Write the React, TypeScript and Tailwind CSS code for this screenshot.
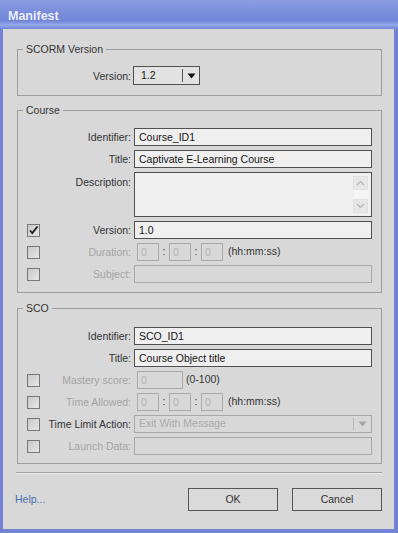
import React from 'react';

const FONT = "font-['Liberation_Sans',Arial,sans-serif]";

const Checkbox: React.FC<{ checked?: boolean }> = ({ checked }) => (
  <span className="w-[13px] h-[13px] shrink-0 border border-[#777] bg-[linear-gradient(135deg,#c9c9c9,#e6e6e6)] flex items-center justify-center">
    {checked && (
      <svg width="11" height="11" viewBox="0 0 11 11">
        <path d="M2 5.5 L4.3 8 L9.5 1.5" fill="none" stroke="#1a1a1a" strokeWidth="1.8" />
      </svg>
    )}
  </span>
);

const Label: React.FC<{ text: string; disabled?: boolean; top?: boolean }> = ({ text, disabled, top }) => (
  <span
    className={`w-[91px] shrink-0 text-right leading-[18px] ${top ? 'pt-[1px]' : ''} ${
      disabled ? 'text-[#a4a4a4]' : 'text-[#333]'
    }`}
  >
    {text}
  </span>
);

const TextBox: React.FC<{ value?: string; disabled?: boolean; className?: string }> = ({ value, disabled, className }) => (
  <div
    className={`h-[18px] border px-[4px] leading-[16px] truncate ${
      disabled ? 'border-[#a9a9a9] bg-[#d8d8d8] text-[#b0b0b0]' : 'border-[#505050] bg-[#efefef] text-[#151515]'
    } ${className ?? ''}`}
  >
    {value}
  </div>
);

const Row: React.FC<{ check?: 'on' | 'off'; children: React.ReactNode; start?: boolean }> = ({ check, children, start }) => (
  <div className={`flex ${start ? 'items-start' : 'items-center'}`}>
    <span className="w-[13px] shrink-0 flex">{check && <Checkbox checked={check === 'on'} />}</span>
    {children}
  </div>
);

const TimeFields: React.FC = () => (
  <div className="flex items-center ml-[6px] text-[#333]">
    <TextBox value="0" disabled className="w-[22px] !px-[3px]" />
    <span className="w-[10px] text-center">:</span>
    <TextBox value="0" disabled className="w-[22px] !px-[3px]" />
    <span className="w-[10px] text-center">:</span>
    <TextBox value="0" disabled className="w-[22px] !px-[3px]" />
    <span className="ml-[5px]">(hh:mm:ss)</span>
  </div>
);

const Arrow: React.FC<{ color: string }> = ({ color }) => (
  <svg width="9" height="6" viewBox="0 0 9 6">
    <path d="M0.5 0.5 L8.5 0.5 L4.5 5.5 Z" fill={color} />
  </svg>
);

const Legend: React.FC<{ text: string }> = ({ text }) => (
  <legend className="-ml-[4px] px-[3px] leading-[12px] text-[#333]">{text}</legend>
);

export default function App() {
  return (
    <div className={`w-[398px] h-[533px] bg-[#7282d5] flex flex-col text-[10.5px] ${FONT}`}>
      <div className="h-[29px] shrink-0 flex items-center pl-[8px] pt-[4px] bg-[linear-gradient(to_bottom,#8d9ee3_0%,#7d90dd_35%,#7286d8_72%,#93a8ec_86%,#7385d6_100%)]">
        <span className="text-[12.5px] font-bold text-[#eef1ff] [text-shadow:0_0_1px_#5d6fc6]">Manifest</span>
      </div>

      <div className="flex-1 ml-[3px] mr-[4px] mb-[4px] bg-[#d8d8d8] flex flex-col">
        {/* SCORM Version */}
        <fieldset className="mt-[14px] ml-[14px] mr-[12px] border border-[#9d9d9d] pl-[9px] pr-[9px] pb-[10px]">
          <Legend text="SCORM Version" />
          <div className="mt-[11px] flex items-center">
            <span className="w-[13px]" />
            <Label text="Version:" />
            <div className="ml-[2px] w-[67px] h-[19px] border border-[#505050] bg-[#e2e2e2] flex items-center">
              <span className="flex-1 pl-[7px] text-[#151515]">1.2</span>
              <span className="w-px h-[13px] bg-[#555]" />
              <span className="w-[16px] flex justify-center">
                <Arrow color="#111" />
              </span>
            </div>
          </div>
        </fieldset>

        {/* Course */}
        <fieldset className="mt-[8px] ml-[14px] mr-[12px] border border-[#9d9d9d] pl-[9px] pr-[9px] pb-[9px]">
          <Legend text="Course" />
          <div className="mt-[12px] flex flex-col gap-[4px]">
            <Row>
              <Label text="Identifier:" />
              <TextBox value="Course_ID1" className="flex-1 ml-[3px]" />
            </Row>
            <Row>
              <Label text="Title:" />
              <TextBox value="Captivate E-Learning Course" className="flex-1 ml-[3px]" />
            </Row>
            <Row start>
              <Label text="Description:" top />
              <div className="flex-1 ml-[3px] h-[45px] border border-[#505050] bg-[#efefef] flex justify-end p-[3px]">
                <div className="w-[15px] flex flex-col justify-between bg-[#f4f4f4]">
                  <span className="h-[14px] bg-[#e6e6e6] border border-[#e0e0e0] flex items-center justify-center">
                    <svg width="9" height="6" viewBox="0 0 9 6">
                      <path d="M1 5 L4.5 1.5 L8 5" fill="none" stroke="#b5b5b5" strokeWidth="1.2" />
                    </svg>
                  </span>
                  <span className="h-[14px] bg-[#e6e6e6] border border-[#e0e0e0] flex items-center justify-center">
                    <svg width="9" height="6" viewBox="0 0 9 6">
                      <path d="M1 1 L4.5 4.5 L8 1" fill="none" stroke="#b5b5b5" strokeWidth="1.2" />
                    </svg>
                  </span>
                </div>
              </div>
            </Row>
            <Row check="on">
              <Label text="Version:" />
              <TextBox value="1.0" className="flex-1 ml-[3px]" />
            </Row>
            <Row check="off">
              <Label text="Duration:" disabled />
              <TimeFields />
            </Row>
            <Row check="off">
              <Label text="Subject:" disabled />
              <TextBox disabled className="flex-1 ml-[3px]" />
            </Row>
          </div>
        </fieldset>

        {/* SCO */}
        <fieldset className="mt-[9px] ml-[14px] mr-[12px] border border-[#9d9d9d] pl-[9px] pr-[9px] pb-[8px]">
          <Legend text="SCO" />
          <div className="mt-[13px] flex flex-col gap-[4px]">
            <Row>
              <Label text="Identifier:" />
              <TextBox value="SCO_ID1" className="flex-1 ml-[3px]" />
            </Row>
            <Row>
              <Label text="Title:" />
              <TextBox value="Course Object title" className="flex-1 ml-[3px]" />
            </Row>
            <Row check="off">
              <Label text="Mastery score:" disabled />
              <TextBox value="0" disabled className="w-[46px] ml-[6px] !px-[3px]" />
              <span className="ml-[3px] text-[#333]">(0-100)</span>
            </Row>
            <Row check="off">
              <Label text="Time Allowed:" disabled />
              <TimeFields />
            </Row>
            <Row check="off">
              <Label text="Time Limit Action:" />
              <div className="flex-1 ml-[3px] h-[18px] border border-[#a9a9a9] flex items-center text-[#aaa]">
                <span className="flex-1 pl-[4px]">Exit With Message</span>
                <span className="w-px h-[12px] bg-[#b5b5b5]" />
                <span className="w-[17px] flex justify-center">
                  <Arrow color="#a5a5a5" />
                </span>
              </div>
            </Row>
            <Row check="off">
              <Label text="Launch Data:" disabled />
              <TextBox disabled className="flex-1 ml-[3px]" />
            </Row>
          </div>
        </fieldset>

        <div className="mt-[8px] ml-[13px] mr-[12px] h-[2px] border-t border-[#a2a2a2] border-b border-b-[#ececec]" />

        <div className="mt-[14px] pl-[12px] pr-[12px] flex items-center">
          <a className="text-[#4a6fae] cursor-pointer">Help...</a>
          <div className="ml-auto flex gap-[14px]">
            <button className="w-[90px] h-[23px] border border-[#555] bg-[#dadada] text-[#333]">OK</button>
            <button className="w-[90px] h-[23px] border border-[#555] bg-[#dadada] text-[#333]">Cancel</button>
          </div>
        </div>
      </div>
    </div>
  );
}
